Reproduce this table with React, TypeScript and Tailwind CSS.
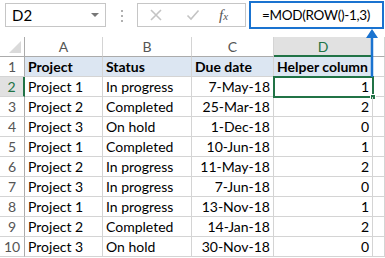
import { ReactNode } from "react";

type Row = { project: string; status: string; due: string; helper: number };

const rows: Row[] = [
	{ project: "Project 1", status: "In progress", due: "7-May-18", helper: 1 },
	{ project: "Project 2", status: "Completed", due: "25-Mar-18", helper: 2 },
	{ project: "Project 3", status: "On hold", due: "1-Dec-18", helper: 0 },
	{ project: "Project 1", status: "Completed", due: "10-Jun-18", helper: 1 },
	{ project: "Project 2", status: "In progress", due: "11-May-18", helper: 2 },
	{ project: "Project 3", status: "In progress", due: "7-Jun-18", helper: 0 },
	{ project: "Project 1", status: "In progress", due: "13-Nov-18", helper: 1 },
	{ project: "Project 2", status: "Completed", due: "14-Jan-18", helper: 2 },
	{ project: "Project 3", status: "On hold", due: "30-Nov-18", helper: 0 },
];

const font = { fontFamily: '"Lato", "Liberation Sans", sans-serif' };

// ordinary worksheet cell with light gridlines
const Cell = ({ w, right, children, className = "" }: { w: string; right?: boolean; children?: ReactNode; className?: string }) => (
	<div
		className={`${w} h-[20px] shrink-0 flex items-center px-[3px] border-r border-b border-[#d4d4d4] overflow-hidden whitespace-nowrap ${
			right ? "justify-end" : ""
		} ${className}`}
	>
		{children}
	</div>
);

const ColHead = ({ w, label, active }: { w: string; label: string; active?: boolean }) => (
	<div
		className={`${w} h-[20px] shrink-0 flex items-center justify-center border-r border-[#d4d4d4] ${
			active ? "bg-[#e1e1e1] text-[#217346] border-b-2 border-b-[#217346]" : "border-b border-b-[#ababab] text-[#555]"
		}`}
	>
		{label}
	</div>
);

const RowHead = ({ n, active }: { n: number; active?: boolean }) => (
	<div
		className={`w-[25px] h-[20px] shrink-0 flex items-center justify-center border-b border-[#d4d4d4] ${
			active ? "bg-[#e1e1e1] text-[#217346] border-r-2 border-r-[#217346]" : "border-r border-r-[#ababab] text-[#555]"
		}`}
	>
		{n}
	</div>
);

export default function App() {
	return (
		<div className="relative w-[385px] h-[258px] overflow-hidden bg-white text-[14px] text-black" style={font}>
			{/* formula bar */}
			<div className="flex items-start h-[37px] pt-[1px]">
				<div className="mt-[2px] ml-[5px] w-[101px] h-[24px] border border-[#c6c6c6] flex items-center pl-[6px] pr-[6px] text-[15px]">
					<span className="flex-1">D2</span>
					<span className="w-0 h-0 border-l-[4px] border-r-[4px] border-t-[4px] border-l-transparent border-r-transparent border-t-[#777]" />
				</div>
				<div className="mt-[9px] ml-[15px] flex flex-col gap-[3px]">
					<span className="w-[2px] h-[2px] bg-[#b0b0b0]" />
					<span className="w-[2px] h-[2px] bg-[#b0b0b0]" />
					<span className="w-[2px] h-[2px] bg-[#b0b0b0]" />
				</div>
				<div className="mt-[2px] ml-[14px] w-[109px] h-[24px] border border-[#c6c6c6] flex items-center">
					<svg width="14" height="14" viewBox="0 0 14 14" className="ml-[11px]">
						<path d="M2 2 L12 12 M12 2 L2 12" stroke="#c4c4c4" strokeWidth="1.6" />
					</svg>
					<svg width="14" height="14" viewBox="0 0 14 14" className="ml-[23px]">
						<path d="M1.5 7.5 L5 11 L12.5 2.5" stroke="#c4c4c4" strokeWidth="1.6" fill="none" />
					</svg>
					<span className="ml-[19px] italic text-[#555] text-[15px]" style={{ fontFamily: '"Liberation Serif", serif' }}>
						f<span className="text-[11px]">x</span>
					</span>
				</div>
				<div className="ml-[3px] w-[135px] h-[28px] border-2 border-[#1a73d0] flex items-center pl-[11px] text-[13.5px] tracking-[-0.3px] whitespace-nowrap">
					=MOD(ROW()-1,3)
				</div>
			</div>

			{/* sheet */}
			<div className="flex">
				<div className="w-[25px] h-[20px] shrink-0 border-r border-b border-[#ababab] flex items-end justify-end p-[3px]">
					<span className="w-0 h-0 border-b-[12px] border-l-[12px] border-b-[#dadada] border-l-transparent" />
				</div>
				<ColHead w="w-[78px]" label="A" />
				<ColHead w="w-[89px]" label="B" />
				<ColHead w="w-[82px]" label="C" />
				<ColHead w="w-[99px]" label="D" active />
				<ColHead w="w-[12px]" label="" />
			</div>

			<div className="flex">
				<RowHead n={1} />
				<Cell w="w-[78px]" className="bg-[#dce6f2] font-bold">Project</Cell>
				<Cell w="w-[89px]" className="bg-[#dce6f2] font-bold">Status</Cell>
				<Cell w="w-[82px]" className="bg-[#dce6f2] font-bold">Due date</Cell>
				<Cell w="w-[99px]" className="bg-[#dce6f2] font-bold">Helper column</Cell>
				<Cell w="w-[12px]" />
			</div>

			{rows.map((r, i) => (
				<div key={i} className="flex">
					<RowHead n={i + 2} active={i === 0} />
					<Cell w="w-[78px]">{r.project}</Cell>
					<Cell w="w-[89px]">{r.status}</Cell>
					<Cell w="w-[82px]" right>
						{r.due}
					</Cell>
					<div className="relative">
						<Cell w="w-[99px]" right>
							{r.helper}
						</Cell>
						{i === 0 && (
							<>
								<div className="absolute -left-[1px] -top-[1px] w-[101px] h-[22px] border-2 border-[#217346]" />
								<div className="absolute -right-[3px] -bottom-[3px] w-[6px] h-[6px] bg-[#217346] border border-white" />
							</>
						)}
					</div>
					<Cell w="w-[12px]" />
				</div>
			))}

			{/* pointer from the formula to the selected cell */}
			<svg className="absolute left-[365px] top-[27px]" width="14" height="52" viewBox="0 0 14 52">
				<path d="M7 4 L7 50" stroke="#1a73d0" strokeWidth="2.5" />
				<path d="M1 11 L7 2 L13 11 Z" fill="#1a73d0" />
			</svg>
		</div>
	);
}
